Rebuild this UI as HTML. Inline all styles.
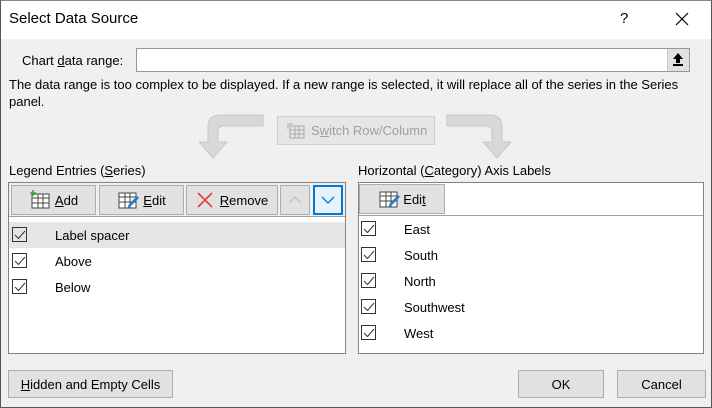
<!DOCTYPE html>
<html><head><style>
*{margin:0;padding:0;box-sizing:border-box}
body{width:712px;height:408px;overflow:hidden;background:#f0f0f0;font-family:"Liberation Sans",sans-serif;font-size:13px;color:#000;position:relative}
.a{position:absolute}
.frame{left:0;top:0;width:712px;height:408px;border:1px solid #555;border-top-color:#888}
.title{left:1px;top:1px;width:710px;height:38px;background:#fff}
.btn{position:absolute;background:#e1e1e1;border:1px solid #adadad;display:flex;align-items:center;justify-content:center;font-size:13px}
.cb{position:absolute;width:15px;height:15px;border:1px solid #333;background:#fff}
.cb svg{position:absolute;left:1px;top:1px}
.t{position:absolute;white-space:nowrap}
u{text-decoration:underline}
</style></head><body>
<div class="a title"></div>
<div class="t" style="left:9px;top:10px;font-size:15px">Select Data Source</div>
<div class="t" style="left:620px;top:10px;font-size:15px">?</div>
<svg class="a" style="left:675px;top:12px" width="14" height="14"><path d="M1 1L13 13M13 1L1 13" stroke="#000" stroke-width="1.2"/></svg>
<div class="t" style="left:22px;top:53px">Chart <u>d</u>ata range:</div>
<div class="a" style="left:136px;top:48px;width:554px;height:24px;background:#fff;border:1px solid #999"></div>
<div class="a" style="left:667px;top:49px;width:22px;height:22px;background:#e1e1e1;border-left:1px solid #ccc"></div>
<svg class="a" style="left:672px;top:52px" width="12" height="15"><path d="M6 1L1 7H4V11H8V7H11Z" fill="#000"/><rect x="1" y="12" width="10" height="2" fill="#000"/></svg>
<div class="t" style="left:9px;top:77px">The data range is too complex to be displayed. If a new range is selected, it will replace all of the series in the Series</div>
<div class="t" style="left:9px;top:94px">panel.</div>
<svg class="a" style="left:190px;top:112px" width="80" height="50"><path d="M73 3H30Q18 3 18 15V30H9L23 46L37 30H28V20Q28 14 34 14H73Z" fill="#d8d8d8" stroke="#c8c8c8"/></svg>
<svg class="a" style="left:443px;top:112px" width="80" height="50"><path d="M4 3H47Q59 3 59 15V30H68L54 46L40 30H49V20Q49 14 43 14H4Z" fill="#d8d8d8" stroke="#c8c8c8"/></svg>
<div class="btn" style="left:277px;top:116px;width:158px;height:29px;color:#a0a0a0;background:#e6e6e6;border-color:#cfcfcf;justify-content:flex-start;padding-left:8px">
<svg width="20" height="18" style="margin-right:5px"><rect x="4" y="4" width="14" height="12" fill="none" stroke="#aaa"/><path d="M4 8H18M4 12H18M9 4V16M13 4V16" stroke="#aaa"/><path d="M2 2h5M2 2v5" stroke="#aaa"/></svg>S<u>w</u>itch Row/Column</div>
<div class="t" style="left:9px;top:163px">Legend Entries (<u>S</u>eries)</div>
<div class="a" style="left:8px;top:182px;width:338px;height:172px;background:#fff;border:1px solid #828282"></div>
<div class="a" style="left:9px;top:183px;width:336px;height:34px;background:#f0f0f0;border-bottom:1px solid #a0a0a0"></div>
<div class="btn" style="left:11px;top:185px;width:85px;height:30px"><svg width="22" height="20" style="margin-right:4px"><rect x="3" y="4" width="17" height="14" fill="#fff" stroke="#444"/><path d="M3 8H20M3 13H20M9 4V18M14 4V18" stroke="#444"/><path d="M4 0V6M1 3H7" stroke="#3a3" stroke-width="1.5"/></svg><u>A</u>dd</div>
<div class="btn" style="left:99px;top:185px;width:85px;height:30px"><svg width="22" height="20" style="margin-right:4px"><rect x="2" y="3" width="17" height="15" fill="#fff" stroke="#444"/><path d="M2 7H19M2 12H19M8 3V18M13 3V18" stroke="#444"/><path d="M10 19L12 14L20 6L22 8L14 16Z" fill="#2b7cd3"/></svg><u>E</u>dit</div>
<div class="btn" style="left:186px;top:185px;width:92px;height:30px"><svg width="18" height="18" style="margin-right:6px"><path d="M2 2L16 16M16 2L2 16" stroke="#e04040" stroke-width="1.6"/></svg><u>R</u>emove</div>
<div class="btn" style="left:280px;top:185px;width:30px;height:30px"><svg width="14" height="8"><path d="M1 7L7 1L13 7" stroke="#bbb" fill="none"/></svg></div>
<div class="btn" style="left:313px;top:185px;width:30px;height:30px;border:2px solid #0078d7;background:#e5f1fb"><svg width="14" height="8"><path d="M1 1L7 7L13 1" stroke="#0078d7" fill="none" stroke-width="1.3"/></svg></div>
<div class="a" style="left:9px;top:222px;width:336px;height:26px;background:#e5e5e5"></div>
<div class="cb" style="left:12px;top:227px;background:transparent"><svg width="12" height="12"><path d="M1 6L4.5 9.5L11 2" stroke="#333" fill="none"/></svg></div>
<div class="t" style="left:55px;top:228px">Label spacer</div>
<div class="cb" style="left:12px;top:253px"><svg width="12" height="12"><path d="M1 6L4.5 9.5L11 2" stroke="#333" fill="none"/></svg></div>
<div class="t" style="left:55px;top:254px">Above</div>
<div class="cb" style="left:12px;top:279px"><svg width="12" height="12"><path d="M1 6L4.5 9.5L11 2" stroke="#333" fill="none"/></svg></div>
<div class="t" style="left:55px;top:280px">Below</div>

<div class="t" style="left:358px;top:163px">Horizontal (<u>C</u>ategory) Axis Labels</div>
<div class="a" style="left:358px;top:182px;width:346px;height:172px;background:#fff;border:1px solid #828282"></div>
<div class="a" style="left:359px;top:183px;width:344px;height:33px;background:#fff;border-bottom:1px solid #a0a0a0"></div>
<div class="btn" style="left:359px;top:184px;width:86px;height:30px"><svg width="22" height="20" style="margin-right:3px"><rect x="2" y="3" width="17" height="15" fill="#fff" stroke="#444"/><path d="M2 7H19M2 12H19M8 3V18M13 3V18" stroke="#444"/><path d="M10 19L12 14L20 6L22 8L14 16Z" fill="#2b7cd3"/></svg>Edi<u>t</u></div>
<div class="cb" style="left:361px;top:221px"><svg width="12" height="12"><path d="M1 6L4.5 9.5L11 2" stroke="#333" fill="none"/></svg></div>
<div class="t" style="left:404px;top:222px">East</div>
<div class="cb" style="left:361px;top:247px"><svg width="12" height="12"><path d="M1 6L4.5 9.5L11 2" stroke="#333" fill="none"/></svg></div>
<div class="t" style="left:404px;top:248px">South</div>
<div class="cb" style="left:361px;top:273px"><svg width="12" height="12"><path d="M1 6L4.5 9.5L11 2" stroke="#333" fill="none"/></svg></div>
<div class="t" style="left:404px;top:274px">North</div>
<div class="cb" style="left:361px;top:299px"><svg width="12" height="12"><path d="M1 6L4.5 9.5L11 2" stroke="#333" fill="none"/></svg></div>
<div class="t" style="left:404px;top:300px">Southwest</div>
<div class="cb" style="left:361px;top:325px"><svg width="12" height="12"><path d="M1 6L4.5 9.5L11 2" stroke="#333" fill="none"/></svg></div>
<div class="t" style="left:404px;top:326px">West</div>

<div class="btn" style="left:8px;top:370px;width:165px;height:28px"><u>H</u>idden and Empty Cells</div>
<div class="btn" style="left:518px;top:370px;width:86px;height:28px">OK</div>
<div class="btn" style="left:617px;top:370px;width:89px;height:28px">Cancel</div>
<div class="a frame"></div>
</body></html>
